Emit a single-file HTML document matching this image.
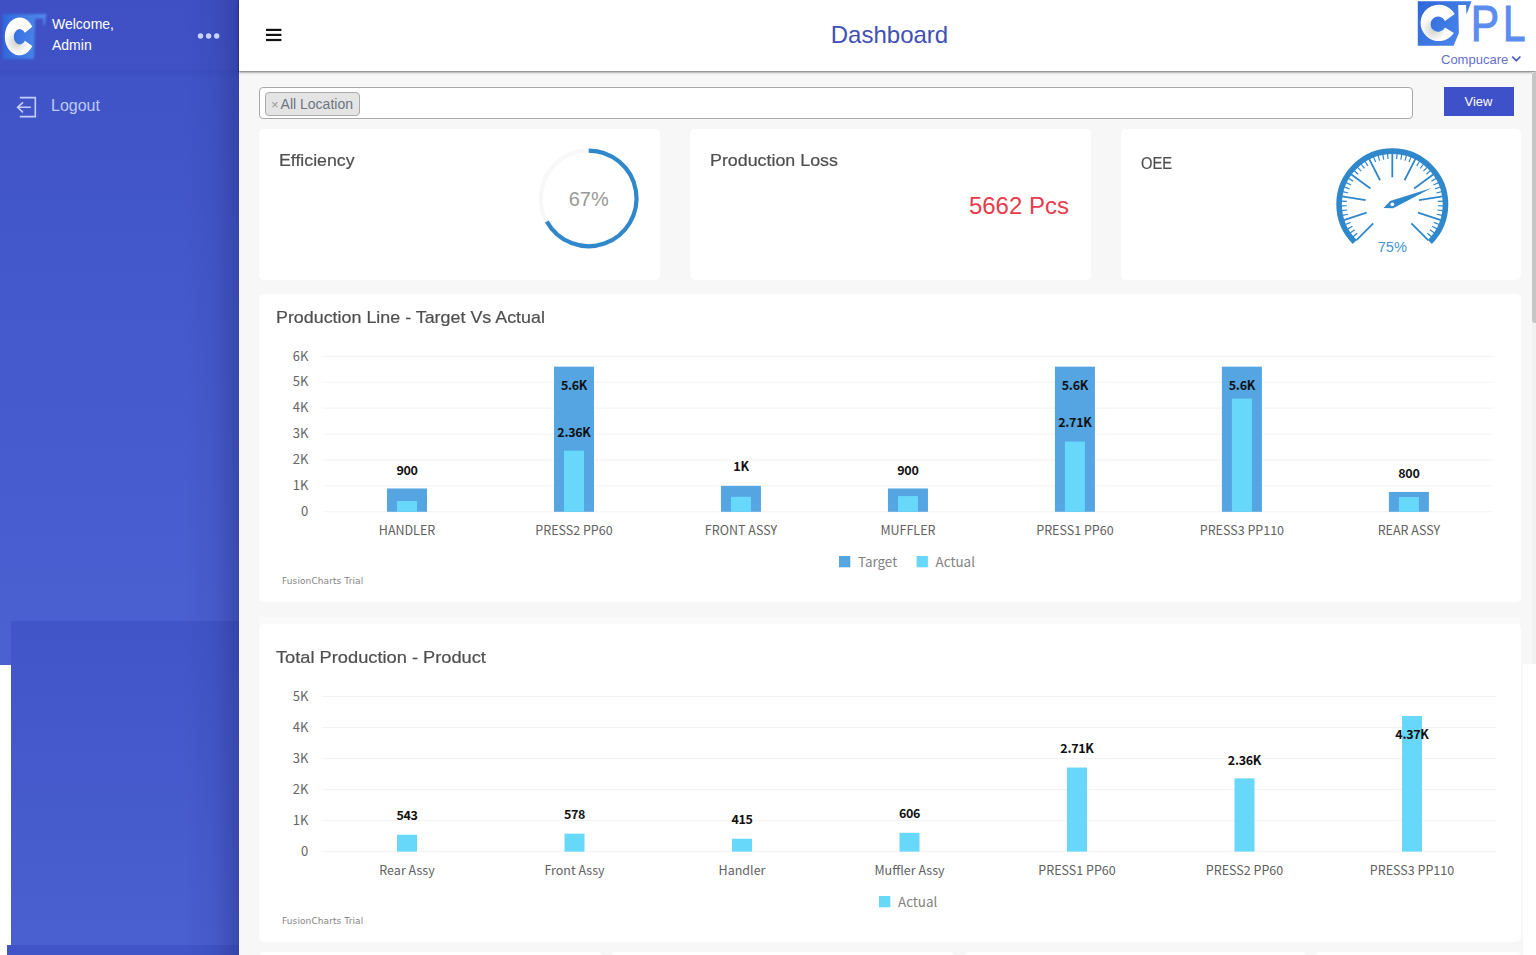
<!DOCTYPE html>
<html lang="en">
<head>
<meta charset="utf-8">
<title>Dashboard</title>
<style>
*{box-sizing:border-box;margin:0;padding:0}
html,body{width:1536px;height:955px;overflow:hidden;background:#f7f7f7;font-family:"Liberation Sans",sans-serif;}
body{position:relative}
.abs{position:absolute}
/* sidebar */
#sb1{left:0;top:0;width:239px;height:665px;background:linear-gradient(180deg,#3f52c6 0%,#4358cb 40%,#4b60d1 100%);}
#sb2{left:11px;top:621px;width:228px;height:324px;background:linear-gradient(180deg,#4155c8 0%,#4a5fd0 100%);}
#sb3{left:7px;top:945px;width:232px;height:10px;background:#4155c8;}
#sbw{left:0;top:665px;width:11px;height:280px;background:#fff}
#sbw2{left:0;top:945px;width:7px;height:10px;background:#fff}
#sbshade{left:185px;top:0;width:54px;height:955px;background:linear-gradient(90deg,rgba(40,50,140,0) 0%,rgba(40,50,140,.13) 55%,rgba(38,48,135,.44) 100%);}
#sbhead{left:0;top:0;width:239px;height:70px;background:rgba(50,60,170,.05);box-shadow:0 2px 5px rgba(40,50,150,.22)}
.welcome{left:52px;top:13.6px;color:#fff;font-size:14px;line-height:21px}
.logout{left:51px;top:97px;color:#bccaf7;font-size:16px;line-height:18px}
/* header */
#hdr{left:239px;top:0;width:1297px;height:70.6px;background:#fff;box-shadow:0 1px 2.5px rgba(0,0,0,.6)}
#title{left:239px;top:0;width:1297px;text-align:center;padding-left:4px;font-size:24px;line-height:27px;top:21px;color:#3f51b5}
.compu{left:1441px;top:52px;font-size:13px;line-height:15px;color:#6670d0}
/* filter */
#sel{left:259px;top:87px;width:1154px;height:32px;background:#fff;border:1px solid #aaa;border-radius:4px}
#tag{left:265px;top:92px;width:95px;height:24px;background:#e4e4e4;border:1px solid #aaa;border-radius:4px;color:#6d7480;font-size:14px;line-height:22px;padding-left:5px;white-space:nowrap}
#tag span{color:#999;font-size:13px;margin-right:2px}
#view{left:1443.5px;top:87px;width:70px;height:29px;background:#3f51c8;color:#fff;font-size:13px;line-height:29px;text-align:center}
.card{background:#fff;border-radius:5px}
.ct{font-size:16.2px;color:#4f4f4f;transform-origin:0 0;-webkit-text-stroke:.2px #4f4f4f;line-height:20px;white-space:nowrap}
svg text{white-space:pre}
</style>
</head>
<body>
<!-- SIDEBAR -->
<div id="sb1" class="abs"></div>
<div id="sb2" class="abs"></div>
<div id="sb3" class="abs"></div>
<div id="sbw" class="abs"></div>
<div id="sbw2" class="abs"></div>
<div id="sbshade" class="abs"></div>
<div id="sbhead" class="abs"></div>
<svg class="abs" style="left:0;top:10px" width="50" height="54" viewBox="0 10 50 54">
  <defs>
    <linearGradient id="lg1" x1="0" y1="0" x2="1" y2="0"><stop offset="0" stop-color="#3168da"/><stop offset="0.45" stop-color="#3f79e4"/><stop offset="1" stop-color="#558bef"/></linearGradient>
    <radialGradient id="cg1" gradientUnits="userSpaceOnUse" cx="16.5" cy="42" r="14"><stop offset="0" stop-color="#cfcfc8"/><stop offset="0.5" stop-color="#ebeae6"/><stop offset="0.9" stop-color="#ffffff"/><stop offset="1" stop-color="#ffffff"/></radialGradient>
  </defs>
  <g style="filter:blur(0.9px)">
  <path d="M2.9 13.9 H46.3 L44.6 25.6 L43.1 25.6 L43.3 18.6 H35.2 L34 59 H2.9 Z" fill="url(#lg1)"/>
  </g>
  <path d="M32.3 26.8 A14.8 18.9 0 1 0 32.3 46.1 L24.9 40.8 A6 7.7 0 1 1 24.9 32.7 Z" fill="url(#cg1)"/>
</svg>
<div class="abs welcome">Welcome,<br>Admin</div>
<svg class="abs" style="left:196px;top:31px" width="26" height="10"><circle cx="4.5" cy="5" r="2.7" fill="#c8d3fb"/><circle cx="12.6" cy="5" r="2.7" fill="#c8d3fb"/><circle cx="20.7" cy="5" r="2.7" fill="#c8d3fb"/></svg>
<svg class="abs" style="left:14px;top:94px" width="26" height="26" viewBox="14 94 26 26" fill="none" stroke="#c3cefa" stroke-width="1.6">
  <path d="M19.8 97.6 H35.3 V116.6 H19.8"/>
  <path d="M30.8 107.3 H17.6 M23 102.3 L17.6 107.3 L23 112.3"/>
</svg>
<div class="abs logout">Logout</div>

<!-- HEADER -->
<div id="hdr" class="abs"></div>
<svg class="abs" style="left:266px;top:28px" width="16" height="14"><rect x="0" y="0.8" width="15.4" height="2.2" fill="#111"/><rect x="0" y="5.8" width="15.4" height="2.2" fill="#111"/><rect x="0" y="10.9" width="15.4" height="2.2" fill="#111"/></svg>
<div id="title" class="abs">Dashboard</div>
<!-- logo -->
<svg class="abs" style="left:1414px;top:0" width="118" height="50" viewBox="1414 0 118 50">
  <defs>
    <linearGradient id="lg2" x1="0" y1="0" x2="1" y2="0.6"><stop offset="0" stop-color="#2f66d8"/><stop offset="0.55" stop-color="#3d78e2"/><stop offset="1" stop-color="#4a86ec"/></linearGradient>
    <radialGradient id="cg2" gradientUnits="userSpaceOnUse" cx="1433.5" cy="29.5" r="15"><stop offset="0" stop-color="#d2d2cd"/><stop offset="0.45" stop-color="#e9e9e6"/><stop offset="0.85" stop-color="#ffffff"/><stop offset="1" stop-color="#ffffff"/></radialGradient>
  </defs>
  <g>
  <path d="M1417.8 1.15 H1471.5 L1466.5 14.4 L1466 5 H1458.2 L1458.9 33 L1453.6 45.8 H1417.8 Z" fill="url(#lg2)"/>
  <path d="M1454.7 14.1 A18.2 18.2 0 1 0 1453.9 33 L1445 27.4 A7.6 7.6 0 1 1 1445 20.9 Z" fill="url(#cg2)"/>
  </g>
  <g font-family="Liberation Sans, sans-serif" font-size="50.5" fill="#5b8def" stroke="#5b8def" stroke-width="1.1">
  <text x="0" y="0" transform="translate(1470.8 40.8) scale(0.843 1)">P</text>
  <text x="0" y="0" transform="translate(1503 40.8) scale(0.8 1)">L</text>
  </g>
</svg>
<div class="abs compu">Compucare</div>
<svg class="abs" style="left:1511px;top:55px" width="11" height="8" fill="none" stroke="#4a5bd0" stroke-width="1.7"><path d="M1.2 1.5 L5.3 5.7 L9.4 1.5"/></svg>

<!-- FILTER -->
<div id="sel" class="abs"></div>
<div id="tag" class="abs"><span>×</span>All Location</div>
<div id="view" class="abs">View</div>

<!-- CARDS -->
<div class="abs card" style="left:258.5px;top:128.5px;width:401px;height:151px"></div>
<div class="abs ct" style="left:279px;top:149.85px;transform:scaleX(1.095)">Efficiency</div>
<svg class="abs" style="left:534px;top:144px" width="110" height="110" viewBox="534 144 110 110">
  <circle cx="588.7" cy="198.4" r="47.8" fill="none" stroke="#f8f8f8" stroke-width="4"/>
  <path d="M588.7 150.6 A47.8 47.8 0 1 1 546.81 221.43" fill="none" stroke="#2f87cc" stroke-width="4.2"/>
  <text x="588.7" y="205.5" text-anchor="middle" font-size="20" fill="#999" font-family="Liberation Sans, sans-serif">67%</text>
</svg>

<div class="abs card" style="left:689.5px;top:128.5px;width:401px;height:151px"></div>
<div class="abs ct" style="left:710px;top:149.85px;transform:scaleX(1.102)">Production Loss</div>
<div class="abs" style="left:869px;top:192.4px;width:200px;text-align:right;font-size:24px;line-height:28px;color:#ea3b4d;white-space:nowrap">5662 Pcs</div>

<div class="abs card" style="left:1120.5px;top:128.5px;width:400px;height:151px"></div>
<div class="abs ct" style="left:1140.5px;top:153.05px;transform:scaleX(.909)">OEE</div>
<svg id="gauge" class="abs" style="left:1330px;top:142px" width="124" height="124" viewBox="1330 142 124 124">
  <path d="M1354.68 241.92 A53.2 53.2 0 1 1 1429.92 241.92" fill="none" stroke="#2f87cc" stroke-width="5.6"/>
  <path d="M1356.24 240.36L1373.21 223.39M1343.8 220.06L1366.62 212.64M1341.93 196.32L1365.63 200.08M1351.04 174.32L1370.46 188.43M1369.15 158.86L1380.04 180.24M1392.3 153.3L1392.3 177.3M1415.45 158.86L1404.56 180.24M1433.56 174.32L1414.14 188.43M1442.67 196.32L1418.97 200.08M1440.8 220.06L1417.98 212.64M1428.36 240.36L1411.39 223.39" stroke="#2f87cc" stroke-width="1.8" fill="none"/>
  <path d="M1353 236.81L1357.24 233.3M1350.12 232.97L1354.67 229.87M1347.61 228.87L1352.43 226.22M1345.49 224.55L1350.54 222.37M1342.53 215.43L1347.9 214.23M1341.7 210.69L1347.16 210M1341.33 205.9L1346.82 205.73M1341.4 201.1L1346.89 201.44M1342.9 191.62L1348.23 192.98M1344.32 187.02L1349.49 188.89M1346.15 182.59L1351.13 184.93M1348.4 178.34L1353.14 181.14M1354.04 170.57L1358.17 174.21M1357.39 167.12L1361.15 171.13M1361.04 164L1364.41 168.35M1364.97 161.24L1367.92 165.88M1373.53 156.88L1375.55 162M1378.07 155.33L1379.61 160.61M1382.74 154.2L1383.77 159.61M1387.5 153.53L1388.02 159M1397.1 153.53L1396.58 159M1401.86 154.2L1400.83 159.61M1406.53 155.33L1404.99 160.61M1411.07 156.88L1409.05 162M1419.63 161.24L1416.68 165.88M1423.56 164L1420.19 168.35M1427.21 167.12L1423.45 171.13M1430.56 170.57L1426.43 174.21M1436.2 178.34L1431.46 181.14M1438.45 182.59L1433.47 184.93M1440.28 187.02L1435.11 188.89M1441.7 191.62L1436.37 192.98M1443.2 201.1L1437.71 201.44M1443.27 205.9L1437.78 205.73M1442.9 210.69L1437.44 210M1442.07 215.43L1436.7 214.23M1439.11 224.55L1434.06 222.37M1436.99 228.87L1432.17 226.22M1434.48 232.97L1429.93 229.87M1431.6 236.81L1427.36 233.3" stroke="#2f87cc" stroke-width="1.2" fill="none"/>
  <path d="M1431.56 188.04L1390.15 200.93L1383.52 207.94L1393.17 208.21Z" fill="#2f87cc"/>
  <circle cx="1392.3" cy="204.3" r="1.9" fill="#fff"/>
  <text x="1392.3" y="252" text-anchor="middle" font-size="14.6" fill="#4595d3" font-family="Liberation Sans, sans-serif">75%</text>
</svg>

<!-- CHART 1 -->
<div class="abs card" style="left:258.5px;top:293.5px;width:1262px;height:308px"></div>
<div class="abs ct" style="left:276px;top:307.35px;transform:scaleX(1.104)">Production Line - Target Vs Actual</div>
<svg id="ch1" class="abs" style="left:258px;top:335px" width="1262" height="262" viewBox="258 335 1262 262">
  <path d="M322.5 511.8H1493.5M322.5 485.88H1493.5M322.5 459.97H1493.5M322.5 434.05H1493.5M322.5 408.13H1493.5M322.5 382.22H1493.5M322.5 356.3H1493.5" stroke="#f3f3f3" stroke-width="1" fill="none"/>
  <g font-family="'Noto Sans CJK SC','Noto Sans CJK JP','Liberation Sans',sans-serif">
  <g font-size="13" fill="#666" text-anchor="end">
  <text x="308.3" y="516">0</text>
  <text x="308.3" y="490.08">1K</text>
  <text x="308.3" y="464.17">2K</text>
  <text x="308.3" y="438.25">3K</text>
  <text x="308.3" y="412.33">4K</text>
  <text x="308.3" y="386.42">5K</text>
  <text x="308.3" y="360.5">6K</text>
  </g>
  <g fill="#54a5e2"><rect x="387" y="488.48" width="40" height="23.32"/><rect x="553.98" y="366.67" width="40" height="145.13"/><rect x="720.96" y="485.88" width="40" height="25.92"/><rect x="887.94" y="488.48" width="40" height="23.32"/><rect x="1054.92" y="366.67" width="40" height="145.13"/><rect x="1221.9" y="366.67" width="40" height="145.13"/><rect x="1388.88" y="491.97" width="40" height="19.83"/></g>
  <g fill="#68d8fa"><rect x="397" y="501.04" width="20" height="10.76"/><rect x="563.98" y="450.64" width="20" height="61.16"/><rect x="730.96" y="496.82" width="20" height="14.98"/><rect x="897.94" y="496.09" width="20" height="15.71"/><rect x="1064.92" y="441.57" width="20" height="70.23"/><rect x="1231.9" y="398.54" width="20" height="113.26"/><rect x="1398.88" y="497.03" width="20" height="14.77"/></g>
  <g font-size="12.5" fill="#626262" text-anchor="middle"><text x="407" y="534.8">HANDLER</text><text x="573.98" y="534.8">PRESS2 PP60</text><text x="740.96" y="534.8">FRONT ASSY</text><text x="907.94" y="534.8">MUFFLER</text><text x="1074.92" y="534.8">PRESS1 PP60</text><text x="1241.9" y="534.8">PRESS3 PP110</text><text x="1408.88" y="534.8">REAR ASSY</text></g>
  <g font-size="12.5" font-weight="bold" fill="#111" text-anchor="middle" letter-spacing="-0.3"><text x="407" y="474.8">900</text><text x="574" y="390.4">5.6K</text><text x="574" y="436.7">2.36K</text><text x="741" y="470.8">1K</text><text x="907.9" y="474.8">900</text><text x="1074.9" y="390.4">5.6K</text><text x="1074.9" y="427">2.71K</text><text x="1241.9" y="390.4">5.6K</text><text x="1408.9" y="477.5">800</text></g>
  <rect x="839" y="556" width="11.3" height="11.3" fill="#54a5e2"/>
  <text x="858" y="566.6" font-size="13.4" fill="#828282">Target</text>
  <rect x="916.6" y="556" width="11.3" height="11.3" fill="#68d8fa"/>
  <text x="935.6" y="566.6" font-size="13.4" fill="#828282">Actual</text>
  </g>
  <text x="282" y="584.2" font-size="9" fill="#858585" font-family="'DejaVu Sans','Liberation Sans',sans-serif" letter-spacing="0.1">FusionCharts Trial</text>
</svg>

<!-- CHART 2 -->
<div class="abs" style="left:258.5px;top:617px;width:1261px;height:10px;background:#fafafa"></div>
<div class="abs card" style="left:258.5px;top:624px;width:1262px;height:318px"></div>
<div class="abs ct" style="left:276px;top:647.45px;transform:scaleX(1.127)">Total Production - Product</div>
<svg id="ch2" class="abs" style="left:258px;top:675px" width="1262" height="262" viewBox="258 675 1262 262">
  <path d="M322.5 851.6H1496.5M322.5 820.58H1496.5M322.5 789.56H1496.5M322.5 758.54H1496.5M322.5 727.52H1496.5M322.5 696.5H1496.5" stroke="#f3f3f3" stroke-width="1" fill="none"/>
  <g font-family="'Noto Sans CJK SC','Noto Sans CJK JP','Liberation Sans',sans-serif">
  <g font-size="13" fill="#666" text-anchor="end">
  <text x="308.3" y="855.8">0</text>
  <text x="308.3" y="824.78">1K</text>
  <text x="308.3" y="793.76">2K</text>
  <text x="308.3" y="762.74">3K</text>
  <text x="308.3" y="731.72">4K</text>
  <text x="308.3" y="700.7">5K</text>
  </g>
  <g fill="#68d8fa"><rect x="397" y="834.76" width="20" height="16.84"/><rect x="564.5" y="833.67" width="20" height="17.93"/><rect x="732" y="838.73" width="20" height="12.87"/><rect x="899.5" y="832.8" width="20" height="18.8"/><rect x="1067" y="767.54" width="20" height="84.06"/><rect x="1234.5" y="778.39" width="20" height="73.21"/><rect x="1402" y="716.04" width="20" height="135.56"/></g>
  <g font-size="12.5" fill="#626262" text-anchor="middle"><text x="407" y="875">Rear Assy</text><text x="574.5" y="875">Front Assy</text><text x="742" y="875">Handler</text><text x="909.5" y="875">Muffler Assy</text><text x="1077" y="875">PRESS1 PP60</text><text x="1244.5" y="875">PRESS2 PP60</text><text x="1412" y="875">PRESS3 PP110</text></g>
  <g font-size="12.5" font-weight="bold" fill="#111" text-anchor="middle" letter-spacing="-0.3"><text x="407" y="820">543</text><text x="574.5" y="819">578</text><text x="742" y="824">415</text><text x="909.5" y="818">606</text><text x="1077" y="753">2.71K</text><text x="1244.5" y="764.5">2.36K</text><text x="1412" y="739">4.37K</text></g>
  <rect x="879" y="896" width="11.3" height="11.3" fill="#68d8fa"/>
  <text x="898" y="906.6" font-size="13.4" fill="#828282">Actual</text>
  </g>
  <text x="282" y="924.2" font-size="9" fill="#858585" font-family="'DejaVu Sans','Liberation Sans',sans-serif" letter-spacing="0.1">FusionCharts Trial</text>
</svg>

<!-- ROW 3 -->
<div class="abs card" style="left:258.5px;top:952px;width:344.5px;height:20px"></div>
<div class="abs card" style="left:611px;top:952px;width:344px;height:20px"></div>
<div class="abs card" style="left:964px;top:952px;width:342px;height:20px"></div>
<div class="abs card" style="left:1314px;top:952px;width:207px;height:20px"></div>

<!-- scrollbar + right artefact -->
<div class="abs" style="left:1532px;top:72px;width:4px;height:593px;background:#f1f1f1"></div>
<div class="abs" style="left:1532px;top:72px;width:4px;height:251px;background:#c6c6c6;border-radius:3px 0 0 3px"></div>
<div class="abs" style="left:1523px;top:664px;width:13px;height:291px;background:#fff"></div>

</body>
</html>
